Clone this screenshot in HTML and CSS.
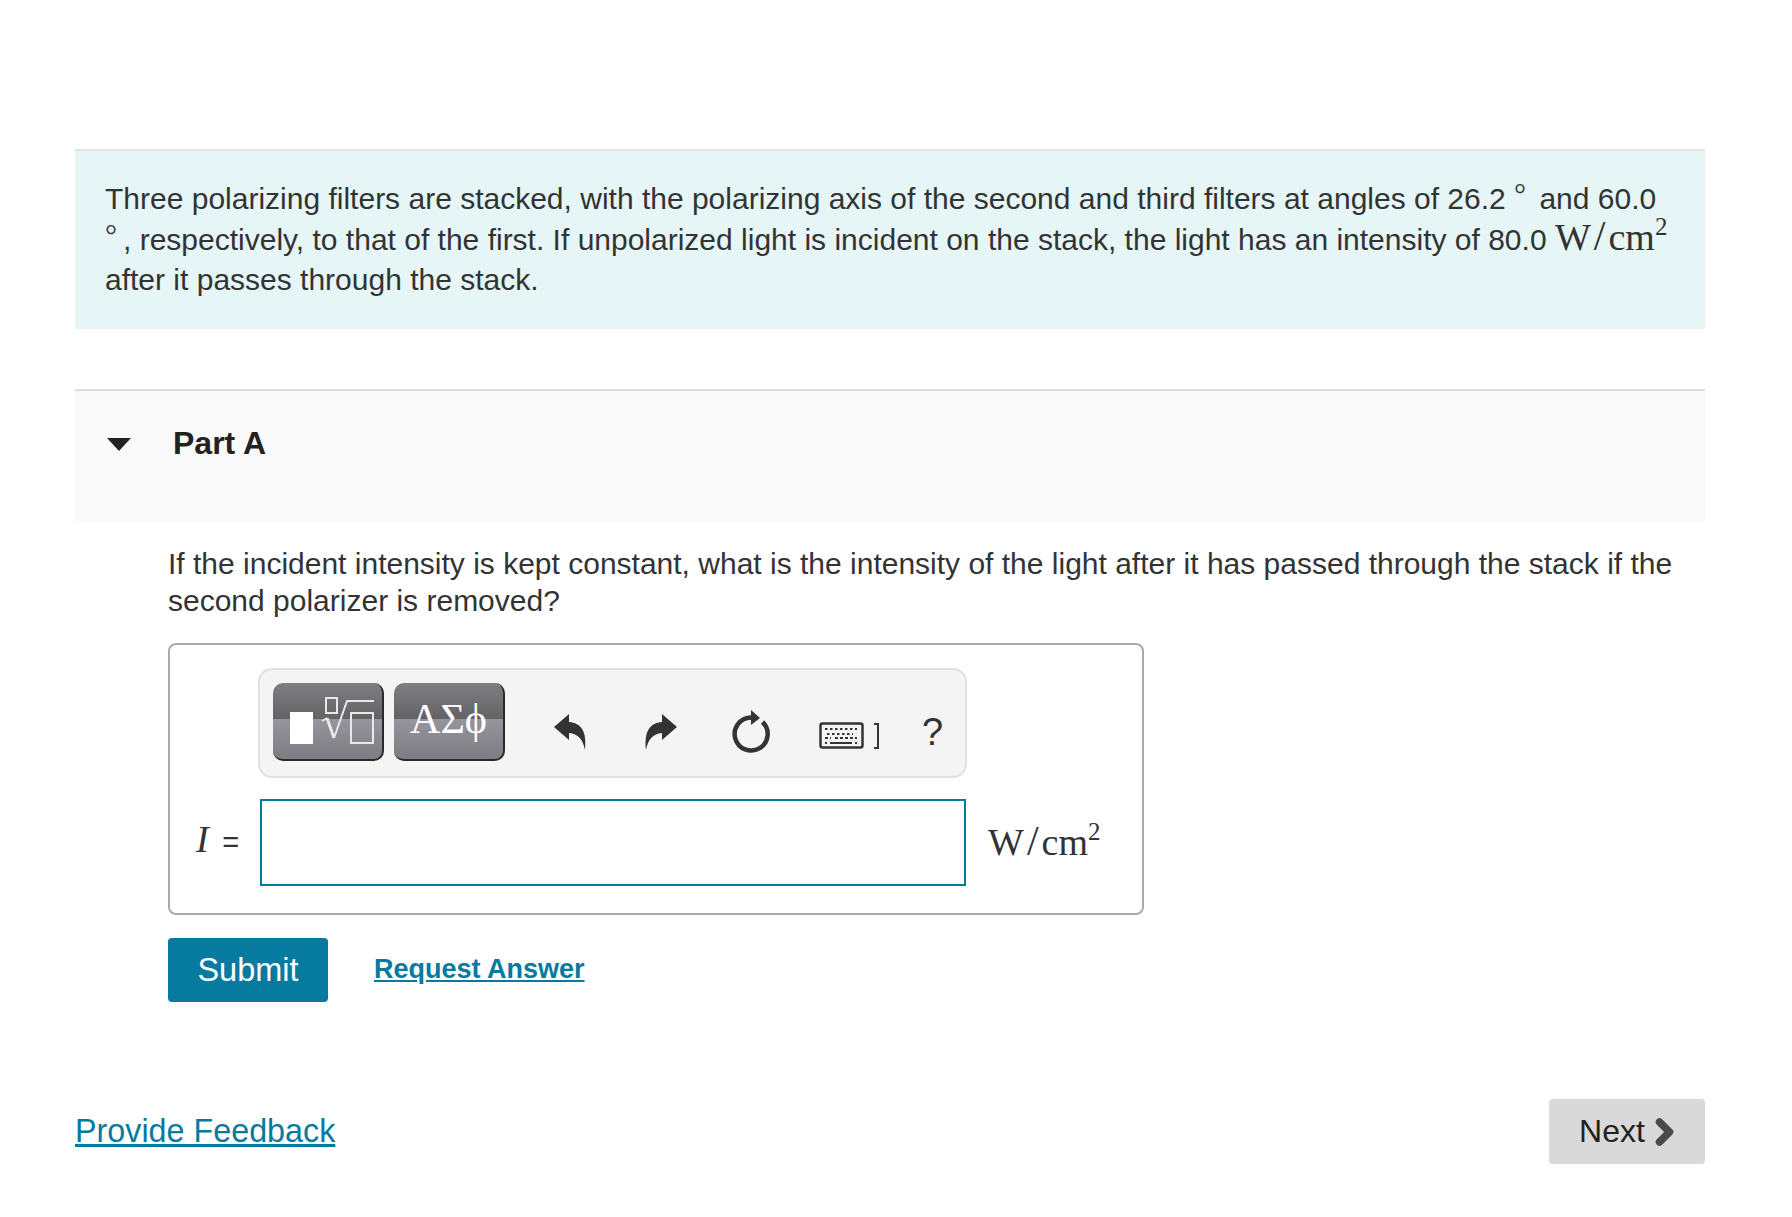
FILE: index.html
```html
<!DOCTYPE html>
<html lang="en">
<head>
  <meta charset="UTF-8" />
  <title>Part A</title>
  <link rel="stylesheet" href="styles.css">
</head>
<body>

  <div class="page">
    <div class="intro">
      Three polarizing filters are stacked, with the polarizing axis of the second and third filters at angles of 26.2 <span class="deg">°</span> and 60.0<br>
      <span class="deg deg-first">°</span>, respectively, to that of the first. If unpolarized light is incident on the stack, the light has an intensity of 80.0 <span class="math">W<span class="slash">/</span>cm<sup>2</sup></span><br>
      after it passes through the stack.
    </div>

    <div class="part-head">
      <svg class="caret" width="26" height="14" viewBox="0 0 26 14"><path d="M1 1H25L13 14Z" fill="#222"/></svg>
      <h3>Part A</h3>
    </div>

    <div class="part-body">
      <p class="question">If the incident intensity is kept constant, what is the intensity of the light after it has passed through the stack if the second polarizer is removed?</p>

      <div class="answer-box">
        <div class="toolbar">
          <div class="tool-btn tool-templates">
            <svg width="111" height="78" viewBox="0 0 111 78">
              <rect x="17" y="29" width="23" height="32" fill="#fff"/>
              <rect x="53" y="15" width="11" height="15" fill="none" stroke="#e8e8e8" stroke-width="2"/>
              <path d="M49 38L54 35" fill="none" stroke="#e8e8e8" stroke-width="2"/>
              <path d="M54 35L61 55" fill="none" stroke="#e8e8e8" stroke-width="3"/>
              <path d="M61 55L74 18H101" fill="none" stroke="#e8e8e8" stroke-width="2"/>
              <rect x="78" y="30" width="22" height="30" fill="none" stroke="#e8e8e8" stroke-width="2"/>
            </svg>
          </div>
          <div class="tool-btn tool-symbols">ΑΣϕ</div>
          <button class="tool-icon tool-undo">
            <svg width="34" height="38" viewBox="0 0 34 38"><path d="M1 14L16 1V9C28 10 34 18 32 37C30 27 26 21 16 20V27Z" fill="#333"/></svg>
          </button>
          <button class="tool-icon tool-redo">
            <svg width="34" height="38" viewBox="0 0 34 38"><path d="M33 14L18 1V9C6 10 0 18 2 37C4 27 8 21 18 20V27Z" fill="#333"/></svg>
          </button>
          <button class="tool-icon tool-reset">
            <svg width="40" height="44" viewBox="0 0 40 44"><path d="M31.500 12A16.500 16.500 0 1 1 20 7.500" fill="none" stroke="#333" stroke-width="4.500"/><path d="M20 0L29 8L20 15Z" fill="#333"/></svg>
          </button>
          <button class="tool-icon tool-keys">
            <svg width="62" height="28" viewBox="0 0 62 28">
              <rect x="1.500" y="1.500" width="42" height="24" rx="2" fill="none" stroke="#333" stroke-width="2.500"/>
              <path d="M6 7H38" stroke="#333" stroke-width="2" stroke-dasharray="2.500 2.500"/>
              <path d="M8 12H34" stroke="#333" stroke-width="2" stroke-dasharray="2.500 2.500"/>
              <path d="M6 16H12M16 16H38" stroke="#333" stroke-width="2" stroke-dasharray="3 2"/>
              <path d="M11 21H33" stroke="#333" stroke-width="2"/>
              <path d="M6 21H8M36 21H38" stroke="#333" stroke-width="2"/>
              <path d="M55 2H59V26H55" fill="none" stroke="#333" stroke-width="2"/>
            </svg>
          </button>
          <button class="tool-icon tool-help">?</button>
        </div>

        <div class="input-row">
          <label class="var-label" for="answer"><i>I</i> <span>=</span></label>
          <input type="text" id="answer" class="answer-input">
          <span class="math unit">W<span class="slash">/</span>cm<sup>2</sup></span>
        </div>
      </div>

      <div class="actions">
        <button class="btn-submit">Submit</button>
        <a href="#" class="link-answer">Request Answer</a>
      </div>
    </div>

    <div class="footer">
      <a href="#" class="link-feedback">Provide Feedback</a>
      <button class="btn-next">Next
        <svg width="20" height="28" viewBox="0 0 20 28"><path d="M4.500 4L14.500 14L4.500 24" fill="none" stroke="#4a4a4a" stroke-width="7.500" stroke-linecap="round" stroke-linejoin="round"/></svg>
      </button>
    </div>
  </div>

</body>
</html>
```

FILE: styles.css
```css
* {
  box-sizing: border-box;
}
body {
  font-family: 'Liberation Sans', Arial, sans-serif;
  background: #ffffff;
  color: #333333;
  margin: 0;
  padding: 0;
}
.page {
  padding: 149px 87px 0 75px;
}
.intro {
  background: #e6f6f7;
  border-top: 2px solid #dfe3e4;
  height: 180px;
  padding: 28px 30px 0;
  font-size: 30px;
  line-height: 40.6px;
}
.deg {
  font-family: 'Liberation Serif', serif;
  font-size: 30px;
  line-height: 0;
  padding-right: 5px;
  vertical-align: 5px;
}
.deg-first {
  padding-right: 6px;
}
.math {
  font-family: 'Liberation Serif', serif;
  font-size: 38px;
  line-height: 0;
}
.math sup {
  font-size: 25px;
  line-height: 0;
  vertical-align: 15px;
}
.slash {
  padding: 0 3px;
  font-size: 42px;
}
.part-head {
  display: flex;
  align-items: flex-start;
  margin-top: 60px;
  height: 132px;
  padding: 34px 0 0 31px;
  background: #f9f9f9;
  border-top: 2px solid #dddddd;
}
.caret {
  margin-top: 12px;
}
.part-head h3 {
  margin: 0 0 0 41px;
  font-size: 32px;
  line-height: 37px;
  font-weight: bold;
  color: #222222;
}
.part-body {
  padding-left: 93px;
}
.question {
  margin: 24px 0 0;
  font-size: 30px;
  line-height: 37px;
}
.answer-box {
  width: 976px;
  height: 272px;
  margin-top: 24px;
  padding: 23px 0 0 88px;
  border: 2px solid #aaaaaa;
  border-radius: 8px;
}
.toolbar {
  display: flex;
  align-items: flex-start;
  width: 709px;
  height: 110px;
  padding: 13px 0 0 13px;
  background: #f4f4f4;
  border: 2px solid #e0e0e0;
  border-radius: 14px;
}
.tool-btn {
  height: 78px;
  border-radius: 10px;
  border-right: 2px solid #2a2a2a;
  border-bottom: 2px solid #2a2a2a;
  background: linear-gradient(#7f7e83 0%, #626264 48%, #96949d 48%, #7d7c81 100%);
  color: #ffffff;
}
.tool-templates {
  width: 111px;
}
.tool-symbols {
  width: 111px;
  margin-left: 10px;
  font-family: 'Liberation Serif', serif;
  font-size: 42px;
  line-height: 72px;
  text-align: center;
}
.tool-icon {
  background: none;
  border: none;
  padding: 0;
  display: flex;
  justify-content: center;
  font-family: 'Liberation Sans', Arial, sans-serif;
  color: #333333;
}
.tool-undo {
  margin: 30px 0 0 48px;
}
.tool-redo {
  margin: 30px 0 0 57px;
}
.tool-reset {
  margin: 27px 0 0 53px;
}
.tool-keys {
  margin: 39px 0 0 48px;
}
.tool-help {
  margin: 29px 0 0 41px;
  font-size: 38px;
  line-height: 40px;
}
.input-row {
  display: flex;
  align-items: center;
  margin: 21px 0 0 -88px;
}
.var-label {
  width: 90px;
  padding: 0 0 8px 26px;
  font-family: 'Liberation Serif', serif;
  font-size: 38px;
}
.var-label span {
  font-family: 'Liberation Sans', Arial, sans-serif;
  font-size: 29px;
  margin-left: 4px;
}
.answer-input {
  width: 706px;
  height: 87px;
  border: 2px solid #007c9f;
  background: #ffffff;
}
.unit {
  margin: 0 0 11px 22px;
}
.actions {
  display: flex;
  align-items: center;
  margin-top: 23px;
}
.btn-submit {
  width: 160px;
  height: 64px;
  background: #067a9f;
  color: #ffffff;
  border: none;
  border-radius: 4px;
  font-family: 'Liberation Sans', Arial, sans-serif;
  font-size: 32.5px;
}
.link-answer {
  margin-left: 46px;
  padding-bottom: 2px;
  font-size: 27px;
  font-weight: bold;
  color: #067a9f;
}
.footer {
  display: flex;
  justify-content: space-between;
  align-items: center;
  margin-top: 97px;
}
.link-feedback {
  font-size: 32.3px;
  color: #067a9f;
}
.btn-next {
  display: flex;
  align-items: center;
  justify-content: center;
  gap: 10px;
  width: 156px;
  height: 65px;
  background: #d9d9d9;
  color: #222222;
  border: none;
  border-radius: 4px;
  font-family: 'Liberation Sans', Arial, sans-serif;
  font-size: 32px;
}
```
